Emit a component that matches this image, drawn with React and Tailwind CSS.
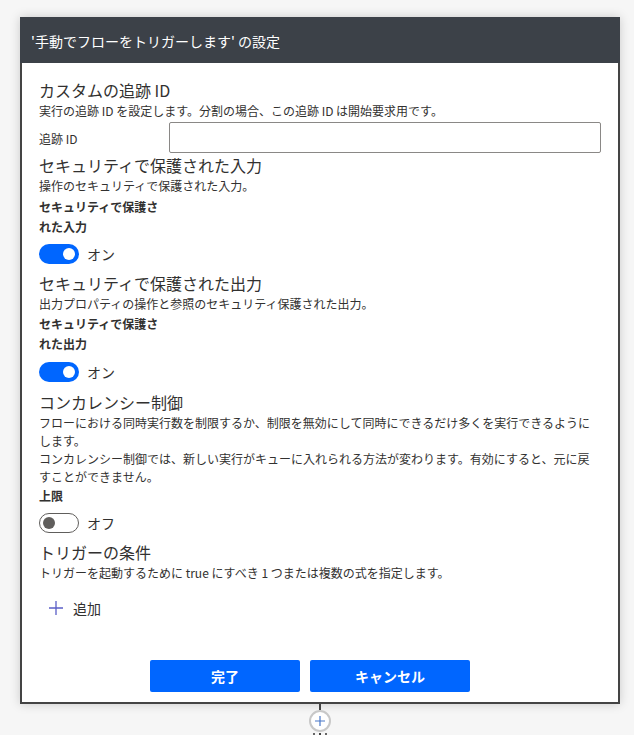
import React, { useState } from 'react';

const font = { fontFamily: '"Noto Sans CJK JP", "Noto Sans", sans-serif' };

const Toggle = ({ on, onChange }) => (
  <div className="flex items-center h-[20px] cursor-pointer" onClick={onChange}>
    {on ? (
      <span className="w-[40px] h-[20px] rounded-full bg-[#0066ff] flex items-center justify-end pr-[4px]">
        <span className="w-[12px] h-[12px] rounded-full bg-white" />
      </span>
    ) : (
      <span className="w-[40px] h-[20px] rounded-full border border-[#605e5c] bg-white flex items-center pl-[3px]">
        <span className="w-[12px] h-[12px] rounded-full bg-[#605e5c]" />
      </span>
    )}
    <span className="ml-[8px] text-[14px] leading-[20px] text-[#323130]">{on ? 'オン' : 'オフ'}</span>
  </div>
);

const Heading = ({ children, className = '' }) => (
  <h2 className={`text-[16px] leading-[24px] text-[#323130] font-normal ${className}`}>{children}</h2>
);

const Desc = ({ children }) => (
  <p className="text-[12px] leading-[18px] text-[#323130]">{children}</p>
);

const Label = ({ children, className = '' }) => (
  <div className={`w-[130px] text-[12px] leading-[20px] font-bold text-[#323130] ${className}`}>{children}</div>
);

export default function App() {
  const [secIn, setSecIn] = useState(true);
  const [secOut, setSecOut] = useState(true);
  const [limit, setLimit] = useState(false);
  const [trackId, setTrackId] = useState('');

  return (
    <div className="min-h-[735px] bg-[#f6f6f6] pt-[17px] overflow-hidden" style={font}>
      <div className="ml-[20px] w-[600px] border-2 border-t-0 border-[#444444] bg-white shadow-[0_0_10px_rgba(0,0,0,0.18)]">
        <div className="h-[46px] bg-[#3c4148] flex items-center -mx-[2px] px-[11px]">
          <span className="text-[14px] leading-[20px] text-white pt-[2px]">'手動でフローをトリガーします' の設定</span>
        </div>

        <div className="px-[17px] pt-[15px] pb-[10px]">
          <Heading>カスタムの追跡 ID</Heading>
          <Desc>実行の追跡 ID を設定します。分割の場合、この追跡 ID は開始要求用です。</Desc>
          <div className="flex items-center mt-[2px]">
            <label className="w-[130px] text-[12px] leading-[18px] text-[#323130] pt-[3px]">追跡 ID</label>
            <input
              value={trackId}
              onChange={e => setTrackId(e.target.value)}
              className="flex-1 h-[31px] border border-[#8a8886] rounded-[2px] px-[8px] text-[14px] outline-none"
            />
          </div>

          <Heading>セキュリティで保護された入力</Heading>
          <Desc>操作のセキュリティで保護された入力。</Desc>
          <Label className="mt-[2px]">セキュリティで保護された入力</Label>
          <div className="mt-[7px]">
            <Toggle on={secIn} onChange={() => setSecIn(!secIn)} />
          </div>

          <Heading className="mt-[7px]">セキュリティで保護された出力</Heading>
          <Desc>出力プロパティの操作と参照のセキュリティ保護された出力。</Desc>
          <Label className="mt-[1px]">セキュリティで保護された出力</Label>
          <div className="mt-[8px]">
            <Toggle on={secOut} onChange={() => setSecOut(!secOut)} />
          </div>

          <Heading className="mt-[8px]">コンカレンシー制御</Heading>
          <Desc>フローにおける同時実行数を制限するか、制限を無効にして同時にできるだけ多くを実行できるようにします。</Desc>
          <Desc>コンカレンシー制御では、新しい実行がキューに入れられる方法が変わります。有効にすると、元に戻すことができません。</Desc>
          <Label>上限</Label>
          <div className="mt-[7px]">
            <Toggle on={limit} onChange={() => setLimit(!limit)} />
          </div>

          <Heading className="mt-[7px]">トリガーの条件</Heading>
          <Desc>トリガーを起動するために true にすべき 1 つまたは複数の式を指定します。</Desc>
          <button className="mt-[16px] ml-[9px] flex items-center h-[20px]">
            <svg width="16" height="16" viewBox="0 0 16 16" className="mr-[9px]">
              <path d="M8 1v14M1 8h14" stroke="#5b5fc7" strokeWidth="1.3" fill="none" />
            </svg>
            <span className="text-[14px] leading-[20px] text-[#323130]">追加</span>
          </button>

          <div className="flex gap-[10px] mt-[42px] pl-[111px]">
            <button className="w-[150px] h-[32px] rounded-[2px] bg-[#0066ff] text-white text-[14px] font-bold">完了</button>
            <button className="w-[160px] h-[32px] rounded-[2px] bg-[#0066ff] text-white text-[14px] font-bold">キャンセル</button>
          </div>
        </div>
      </div>

      <div className="ml-[20px] w-[600px] flex flex-col items-center">
        <div className="w-[2px] h-[6px] bg-[#444444]" />
        <div className="w-[22px] h-[22px] rounded-full border-2 border-[#c8c8c8] bg-white flex items-center justify-center">
          <svg width="12" height="12" viewBox="0 0 12 12">
            <path d="M6 1v10M1 6h10" stroke="#4a78c8" strokeWidth="1.2" fill="none" />
          </svg>
        </div>
        <div className="flex gap-[4px] mt-[1px]">
          <span className="w-[2px] h-[4px] bg-[#666]" />
          <span className="w-[2px] h-[4px] bg-[#444]" />
          <span className="w-[2px] h-[4px] bg-[#666]" />
        </div>
      </div>
    </div>
  );
}
